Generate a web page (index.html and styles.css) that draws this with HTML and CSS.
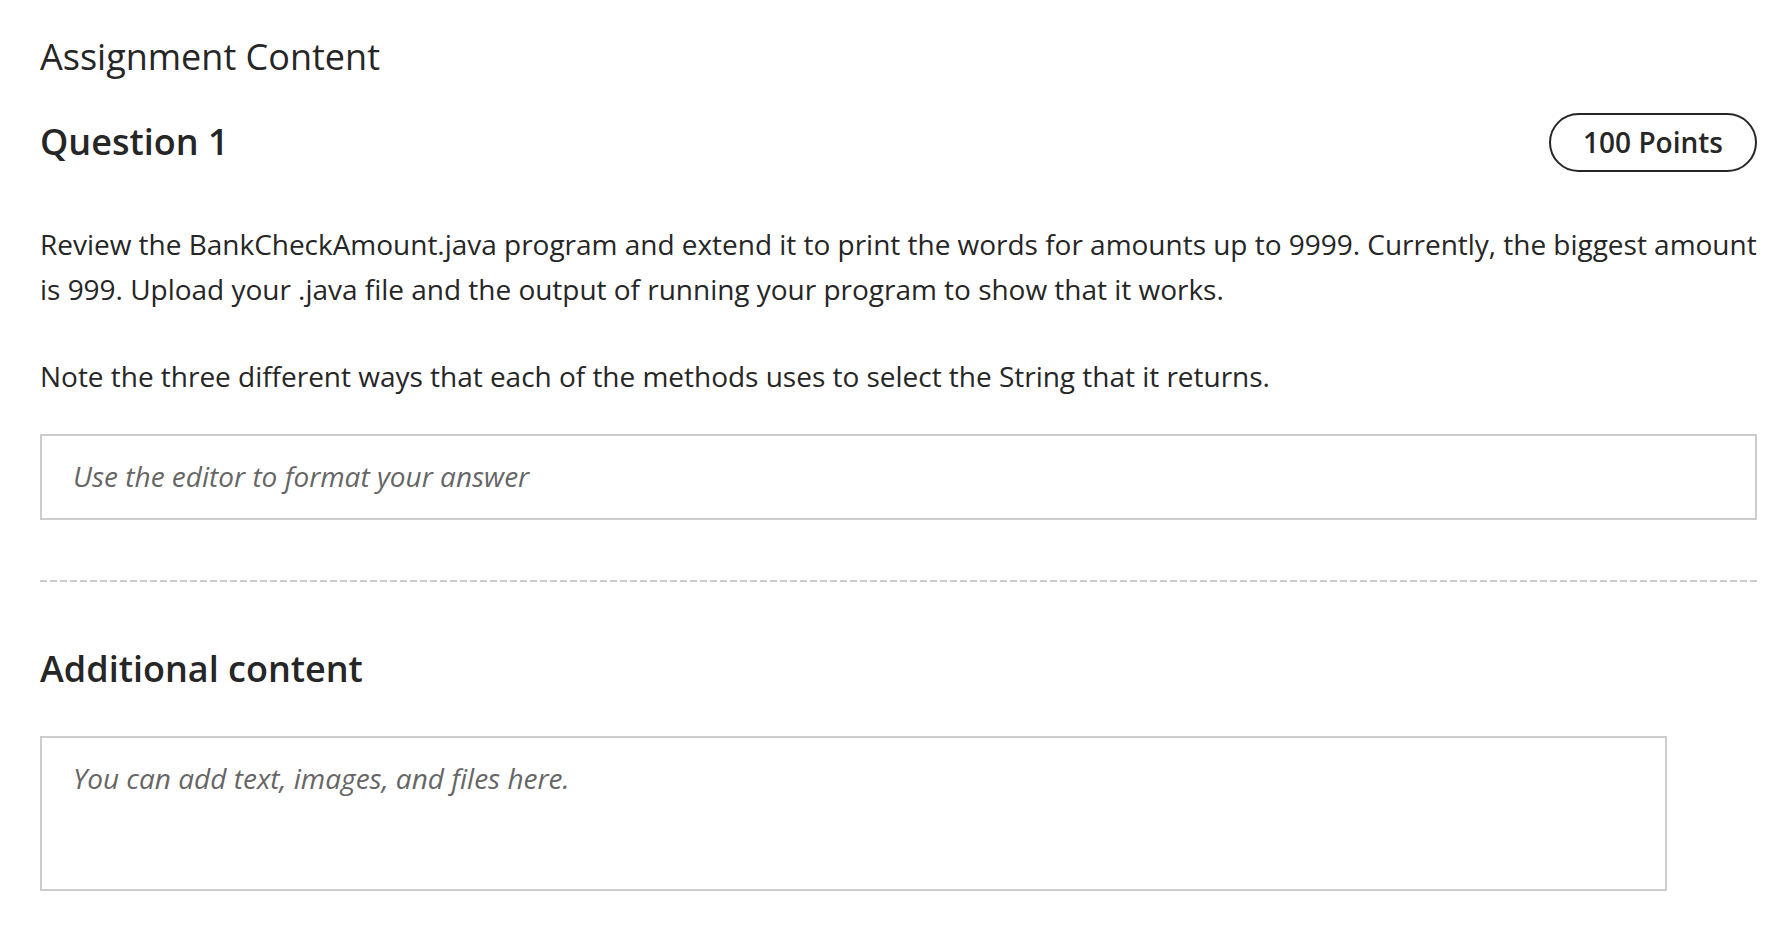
FILE: index.html
```html
<!DOCTYPE html>
<html lang="en">
<head>
<meta charset="utf-8">
<title>Assignment Content</title>
<link rel="stylesheet" href="styles.css">
</head>
<body>
<main class="page">
  <h1 class="page-title">Assignment Content</h1>
  <section class="question">
    <div class="question-head">
      <h2 class="question-title">Question 1</h2>
      <span class="points">100 Points</span>
    </div>
    <div class="question-body">
      <p>Review the BankCheckAmount.java program and extend it to print the words for amounts up to 9999. Currently, the biggest amount is 999. Upload your .java file and the output of running your program to show that it works.</p>
      <p>Note the three different ways that each of the methods uses to select the String that it returns.</p>
    </div>
    <div class="editor answer">Use the editor to format your answer</div>
  </section>
  <hr class="divider">
  <section class="additional">
    <h2 class="additional-title">Additional content</h2>
    <div class="editor extra">You can add text, images, and files here.</div>
  </section>
</main>
</body>
</html>
```

FILE: styles.css
```css
html, body {
  margin: 0;
  padding: 0;
  background: #ffffff;
}

body {
  font-family: "Open Sans", "Noto Sans", sans-serif;
  color: #262626;
}

.page {
  width: 1717px;
  padding: 33px 0 0 40px;
  box-sizing: content-box;
}

.page-title {
  margin: 0;
  font-size: 36px;
  line-height: 48px;
  font-weight: 400;
}

.question-head {
  margin-top: 32px;
  display: flex;
  align-items: center;
  justify-content: space-between;
  height: 58px;
}

.question-title {
  margin: 0;
  font-size: 36px;
  line-height: 48px;
  font-weight: 600;
}

.points {
  display: inline-flex;
  align-items: center;
  justify-content: center;
  box-sizing: border-box;
  height: 59px;
  padding: 0 32px;
  border: 2px solid #262626;
  border-radius: 30px;
  font-size: 28px;
  font-weight: 600;
  line-height: 1;
}

.question-body {
  margin-top: 51px;
  margin-right: -24px;
}

.question-body p {
  margin: 0 0 42px;
  font-size: 28px;
  line-height: 45px;
  letter-spacing: -0.02px;
}

.question-body p:last-child {
  margin-bottom: 0;
}

.editor {
  box-sizing: border-box;
  border: 2px solid #cccccc;
  padding: 18px 31px;
  font-size: 28px;
  line-height: 45px;
  font-style: italic;
  color: #666666;
}

.answer {
  margin-top: 35px;
  height: 86px;
}

.divider {
  margin: 60px 0 0;
  border: 0;
  height: 2px;
  background: repeating-linear-gradient(90deg, #cccccc 0 7px, transparent 7px 10px);
}

.additional {
  margin-top: 65px;
}

.additional-title {
  margin: 0;
  font-size: 36px;
  line-height: 44px;
  font-weight: 600;
}

.extra {
  margin-top: 45px;
  width: 1627px;
  height: 155px;
}
```
